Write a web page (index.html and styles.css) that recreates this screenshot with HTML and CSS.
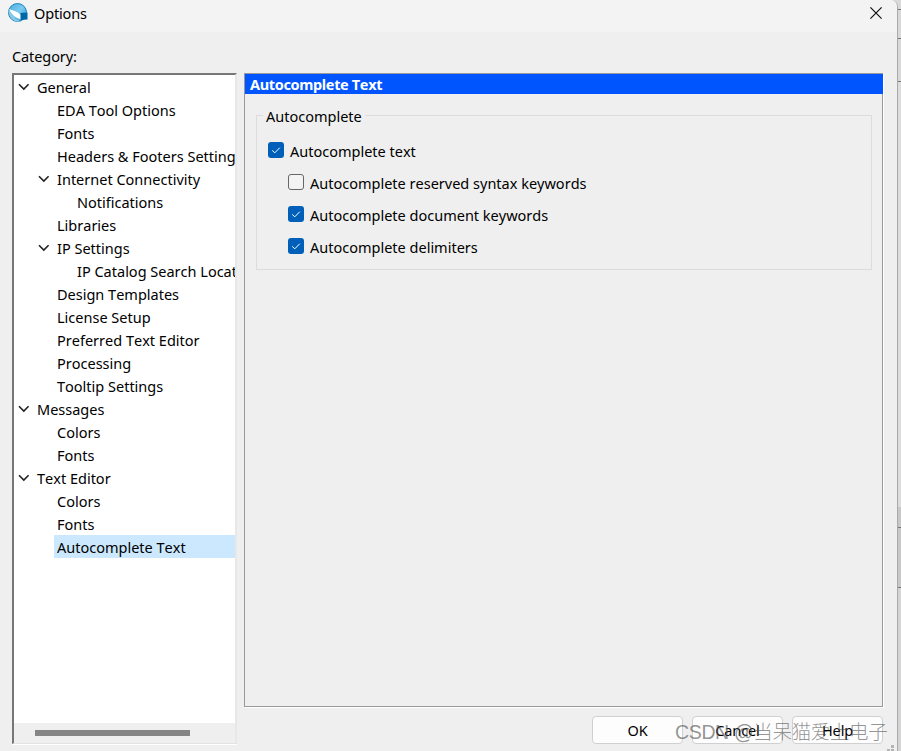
FILE: index.html
```html
<!DOCTYPE html>
<html lang="en">
<head>
<meta charset="utf-8">
<title>Options</title>
<link rel="stylesheet" href="styles.css">
</head>
<body>
<svg width="0" height="0" class="defs"><defs>
<symbol id="chev" viewBox="0 0 12 8"><path d="M1 1.2 5.8 6 10.6 1.2" fill="none" stroke="#222" stroke-width="1.6"/></symbol>
<symbol id="check" viewBox="0 0 16 16"><path d="M4.200 8.400 6.800 10.800 11.800 5.700" fill="none" stroke="#fff" stroke-width="1"/></symbol>
</defs></svg>
<div class="desktop">
<main class="window">
<header class="titlebar">
<svg class="logo" viewBox="0 0 20 20"><defs><linearGradient id="g" x1="0" y1="0" x2="1" y2="1"><stop offset="0" stop-color="#48a8dc"/><stop offset=".5" stop-color="#7bcbf0"/><stop offset="1" stop-color="#238fca"/></linearGradient></defs><circle cx="9.5" cy="9.5" r="9" fill="url(#g)" stroke="#1685bd"/><path d="M1 6C4 7.500 9 8 13 12V16.500C8 15 3.500 12 1 6Z" fill="#fff"/><path d="M1 8C2.500 14.500 6 18 11 18" fill="none" stroke="#94c9e2" stroke-width="1.500"/><path d="M12.500 10 19.500 9.500V16.500L12.500 17Z" fill="#0067a6"/></svg>
<h1>Options</h1>
<svg class="close" viewBox="0 0 12 12"><path d="M.4.4 11.600 11.600M11.600.4.4 11.600" stroke="#111" stroke-width="1.200"/></svg>
</header>
<div class="content">
<section class="sidebar">
<div class="label">Category:</div>
<div class="tree">
<ul>
<li class="l0"><svg><use href="#chev"/></svg><span>General</span></li>
<li class="l1"><span>EDA Tool Options</span></li>
<li class="l1"><span>Fonts</span></li>
<li class="l1"><span>Headers &amp; Footers Settings</span></li>
<li class="l1"><svg><use href="#chev"/></svg><span>Internet Connectivity</span></li>
<li class="l2"><span>Notifications</span></li>
<li class="l1"><span>Libraries</span></li>
<li class="l1"><svg><use href="#chev"/></svg><span>IP Settings</span></li>
<li class="l2"><span>IP Catalog Search Locations</span></li>
<li class="l1"><span>Design Templates</span></li>
<li class="l1"><span>License Setup</span></li>
<li class="l1"><span>Preferred Text Editor</span></li>
<li class="l1"><span>Processing</span></li>
<li class="l1"><span>Tooltip Settings</span></li>
<li class="l0"><svg><use href="#chev"/></svg><span>Messages</span></li>
<li class="l1"><span>Colors</span></li>
<li class="l1"><span>Fonts</span></li>
<li class="l0"><svg><use href="#chev"/></svg><span>Text Editor</span></li>
<li class="l1"><span>Colors</span></li>
<li class="l1"><span>Fonts</span></li>
<li class="l1 selected"><span>Autocomplete Text</span></li>
</ul>
<div class="scrollbar"><div class="thumb"></div></div>
</div>
</section>
<section class="right">
<div class="panel">
<h2>Autocomplete Text</h2>
<div class="group">
<div class="legend">Autocomplete</div>
<div class="option"><span class="box on"><svg><use href="#check"/></svg></span><span>Autocomplete text</span></div>
<div class="option sub"><span class="box"></span><span>Autocomplete reserved syntax keywords</span></div>
<div class="option sub"><span class="box on"><svg><use href="#check"/></svg></span><span>Autocomplete document keywords</span></div>
<div class="option sub"><span class="box on"><svg><use href="#check"/></svg></span><span>Autocomplete delimiters</span></div>
</div>
</div>
<footer class="buttons"><button>OK</button><button>Cancel</button><button>Help</button></footer>
</section>
</div>
<svg class="grip" viewBox="0 0 10 10" fill="#b4b4b4"><path d="M7 0h3v3H7zM3 4h3v3H3zM7 4h3v3H7zM0 8h2v2H0zM3 8h3v2H3zM7 8h3v2H7z"/></svg>
<div class="watermark">CSDN @当呆猫爱上电子</div>
</main>
<aside class="edge"><i class="e1"></i><i class="e2"></i><i class="e3"></i><i class="e4"></i><i class="e5"></i><i class="e6"></i></aside>
</div>
</body>
</html>
```

FILE: styles.css
```css
* { box-sizing: border-box; }
body { margin: 0; font: 14.5px/23px "Noto Sans", sans-serif; font-kerning: none; color: #000; overflow: hidden; }
.defs { position: absolute; }
.desktop { display: flex; width: 901px; height: 751px; background: #d9d9d9; }
.window { position: relative; width: 898px; height: 751px; background: #efefef; border-right: 1px solid #aaa; border-top-right-radius: 7px; display: flex; flex-direction: column; overflow: hidden; }
.titlebar { height: 32px; flex: none; display: flex; align-items: flex-start; background: #f3f3f3; padding: 3px 15px 0 8px; }
.logo { width: 20px; height: 20px; }
h1 { margin: 0 auto 0 6px; font-size: 14.5px; font-weight: 400; line-height: 20px; letter-spacing: -.15px; }
.close { width: 12px; height: 12px; margin-top: 4px; }
.content { flex: 1; display: flex; padding-left: 12px; gap: 7px; }
.sidebar { width: 225px; padding-top: 14px; }
.label { height: 27px; line-height: 21px; letter-spacing: -.1px; }
.tree { height: 671px; border: 2px solid; border-color: #777 #e8e8e8 #e3e3e3 #777; border-bottom-width: 1px; box-shadow: 0 1px #fff; background: #fff; display: flex; flex-direction: column; overflow: hidden; }
ul { list-style: none; margin: 0; padding: 0; flex: 1; overflow: hidden; }
li { height: 23px; display: flex; white-space: nowrap; line-height: 25px; }
li svg { width: 12px; height: 8px; margin: 8px 7px 0 -19px; flex: none; }
li span { flex: none; }
.l0 { padding-left: 23px; }
.l1 { padding-left: 43px; }
.l2 { padding-left: 63px; }
.selected { margin-left: 40px; padding-left: 3px; background: #cce8ff; }
.scrollbar { height: 20px; flex: none; background: #efefef; padding: 7px 0 0 21px; }
.thumb { width: 155px; height: 6px; background: #858585; }
.right { width: 639px; padding-top: 41px; }
.panel { height: 634px; border: 1px solid #999; box-shadow: 1px 1px #fff; background: #efefef; }
h2 { margin: 0 -1px 0 0; height: 20px; background: #05f; color: #fff; font-size: 14.5px; line-height: 20px; padding-left: 5px; letter-spacing: -.35px; }
.group { margin: 21px 10px 0 11px; height: 155px; border: 1px solid #dcdcdc; }
.legend { width: max-content; height: 24px; line-height: 22px; margin: -11px 0 0 6px; padding: 0 3px; background: #efefef; }
.option { display: flex; gap: 6px; height: 32px; padding: 13px 0 0 11px; white-space: nowrap; }
.option > span:last-child { line-height: 18px; }
.sub { padding-left: 31px; }
.box { width: 16px; height: 16px; border: 1px solid #666; border-radius: 3px; flex: none; background: #f3f3f3; display: flex; }
.on { border: 0; background: #005fb8; }
.box svg { width: 16px; height: 16px; }
.buttons { display: flex; gap: 9px; padding: 9px 0 0 348px; }
button { width: 91px; height: 28px; border: 1px solid #d0d0d0; border-radius: 4px; background: #fdfdfd; font: inherit; letter-spacing: -.1px; line-height: 26px; padding: 0 0 1px; color: #000; }
.grip { position: absolute; right: 3px; bottom: -4px; width: 10px; height: 10px; }
.watermark { position: absolute; left: 675px; top: 718px; font: 300 19.5px/28px "Liberation Sans", "Noto Sans CJK SC", sans-serif; letter-spacing: -.35px; color: rgba(80,80,80,.62); white-space: nowrap; }
.edge { width: 3px; display: flex; flex-direction: column; }
.edge i { flex: none; border-bottom: 1px solid #777; background: #d9d9d9; }
.e1 { height: 10px; }
.e2 { height: 29px; }
.e3 { height: 43px; }
.edge .e4 { height: 446px; background: linear-gradient(#ddd 425px, #c8c8c8 425px); }
.edge .e5 { height: 60px; background: #c8c8c8; }
.edge .e6 { height: 163px; background: #d5d5d5; border: 0; }
```
